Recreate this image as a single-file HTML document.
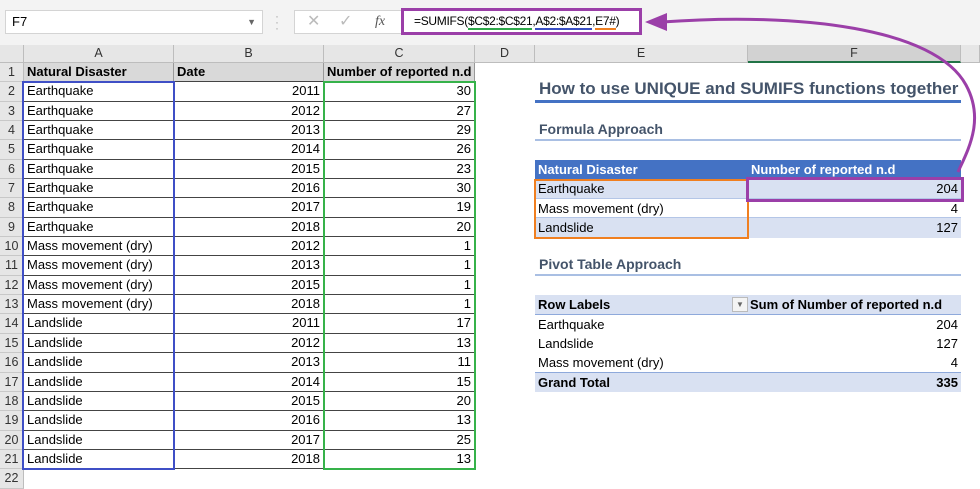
<!DOCTYPE html>
<html><head><meta charset="utf-8"><style>
*{box-sizing:border-box;margin:0;padding:0}
body{width:980px;height:489px;overflow:hidden;background:#fff;font-family:"Liberation Sans",Calibri,sans-serif;font-size:13px;color:#000;position:relative}
.abs{position:absolute}
.top{left:0;top:0;width:980px;height:45px;background:#f3f3f3}
.grid{position:absolute;left:0;top:63px;display:grid;grid-template-columns:24px 150px 150px 151px;grid-template-rows:repeat(22,19.35px)}
.grid div{border-bottom:1px solid #444;border-right:1px solid #999;padding:0 3px;line-height:18px;white-space:nowrap;overflow:hidden}
.grid .rh{background:#e6e6e6;border-bottom:1px solid #c8c8c8;border-right:1px solid #bdbdbd;text-align:center;padding:0;color:#333;font-size:12.5px}
.grid .h{background:#d9d9d9;font-weight:bold}
.grid .r{text-align:right}
.grid .e{border:none}
.ch{position:absolute;top:45px;height:18px;background:#e6e6e6;border-right:1px solid #bdbdbd;border-bottom:1px solid #bdbdbd;text-align:center;line-height:17px;color:#333;font-size:12.5px}
.t{position:absolute;color:#44546a;font-weight:bold;white-space:nowrap}
.row{position:absolute;height:19.5px;line-height:19px;padding:0 3px;white-space:nowrap}
</style></head><body>
<div class="abs top"></div>
<div class="abs" style="left:5px;top:10px;width:258px;height:24px;background:#fff;border:1px solid #d4d4d4;line-height:22px;padding-left:6px;font-size:13px">F7<span style="position:absolute;right:6px;top:0;font-size:9px;color:#666">▼</span></div>
<div class="abs" style="left:275px;top:13px;color:#aaa;font-size:12px;line-height:6px">·<br>·<br>·</div>
<div class="abs" style="left:294px;top:10px;width:108px;height:24px;background:#fff;border:1px solid #d4d4d4;color:#bbb;font-size:16px;line-height:22px"><span style="position:absolute;left:12px">✕</span><span style="position:absolute;left:44px">✓</span><span style="position:absolute;left:80px;color:#555;font-style:italic;font-family:'Liberation Serif',serif;font-size:14px">fx</span></div>
<div class="abs" style="left:401px;top:8px;width:241px;height:27px;background:#fff;border:3px solid #9b3fa8;line-height:20px;padding-left:10px;font-size:12px;letter-spacing:-0.3px;white-space:nowrap;overflow:hidden">=SUMIFS(<span style="border-bottom:2px solid #2ea84a">$C$2:$C$21</span>,<span style="border-bottom:2px solid #3a4fc4">A$2:$A$21</span>,<span style="border-bottom:2px solid #f07f20">E7#</span>)</div>
<div class="ch" style="left:0;width:24px"></div>
<div class="ch" style="left:24px;width:150px">A</div>
<div class="ch" style="left:174px;width:150px">B</div>
<div class="ch" style="left:324px;width:151px">C</div>
<div class="ch" style="left:475px;width:60px">D</div>
<div class="ch" style="left:535px;width:213px">E</div>
<div class="ch" style="left:748px;width:213px;background:#d2d2d2;border-bottom:2px solid #217346">F</div>
<div class="ch" style="left:961px;width:19px"></div>
<div class="grid">
<div class="rh">1</div><div class="h">Natural Disaster</div><div class="h">Date</div><div class="h">Number of reported n.d</div>
<div class="rh">2</div><div>Earthquake</div><div class="r">2011</div><div class="r">30</div>
<div class="rh">3</div><div>Earthquake</div><div class="r">2012</div><div class="r">27</div>
<div class="rh">4</div><div>Earthquake</div><div class="r">2013</div><div class="r">29</div>
<div class="rh">5</div><div>Earthquake</div><div class="r">2014</div><div class="r">26</div>
<div class="rh">6</div><div>Earthquake</div><div class="r">2015</div><div class="r">23</div>
<div class="rh">7</div><div>Earthquake</div><div class="r">2016</div><div class="r">30</div>
<div class="rh">8</div><div>Earthquake</div><div class="r">2017</div><div class="r">19</div>
<div class="rh">9</div><div>Earthquake</div><div class="r">2018</div><div class="r">20</div>
<div class="rh">10</div><div>Mass movement (dry)</div><div class="r">2012</div><div class="r">1</div>
<div class="rh">11</div><div>Mass movement (dry)</div><div class="r">2013</div><div class="r">1</div>
<div class="rh">12</div><div>Mass movement (dry)</div><div class="r">2015</div><div class="r">1</div>
<div class="rh">13</div><div>Mass movement (dry)</div><div class="r">2018</div><div class="r">1</div>
<div class="rh">14</div><div>Landslide</div><div class="r">2011</div><div class="r">17</div>
<div class="rh">15</div><div>Landslide</div><div class="r">2012</div><div class="r">13</div>
<div class="rh">16</div><div>Landslide</div><div class="r">2013</div><div class="r">11</div>
<div class="rh">17</div><div>Landslide</div><div class="r">2014</div><div class="r">15</div>
<div class="rh">18</div><div>Landslide</div><div class="r">2015</div><div class="r">20</div>
<div class="rh">19</div><div>Landslide</div><div class="r">2016</div><div class="r">13</div>
<div class="rh">20</div><div>Landslide</div><div class="r">2017</div><div class="r">25</div>
<div class="rh">21</div><div>Landslide</div><div class="r">2018</div><div class="r">13</div>
<div class="rh">22</div><div class="e"></div><div class="e"></div><div class="e"></div>
</div>
<div class="abs" style="left:22px;top:81px;width:153px;height:389px;border:2px solid #3f4fc6"></div>
<div class="abs" style="left:323px;top:81px;width:153px;height:389px;border:2px solid #36b24a"></div>
<div class="t" style="left:539px;top:79px;font-size:17px">How to use UNIQUE and SUMIFS functions together</div>
<div class="abs" style="left:535px;top:100px;width:426px;height:3px;background:#4472c4"></div>
<div class="t" style="left:539px;top:121px;font-size:14px">Formula Approach</div>
<div class="abs" style="left:535px;top:139px;width:426px;height:2px;background:#a9bfe3"></div>
<div class="abs" style="left:535px;top:160px;width:426px;height:78px;border:1px solid #8ea9db"></div>
<div class="row" style="left:535px;top:160px;width:426px;background:#4472c4;color:#fff;font-weight:bold"><span>Natural Disaster</span><span style="position:absolute;left:216px">Number of reported n.d</span></div>
<div class="row" style="left:535px;top:179px;width:426px;background:#d9e1f2;border-bottom:1px solid #b4c6e7">Earthquake<span style="position:absolute;right:3px">204</span></div>
<div class="row" style="left:535px;top:198.5px;width:426px;background:#fff;border-bottom:1px solid #b4c6e7">Mass movement (dry)<span style="position:absolute;right:3px">4</span></div>
<div class="row" style="left:535px;top:218px;width:426px;background:#d9e1f2">Landslide<span style="position:absolute;right:3px">127</span></div>
<div class="abs" style="left:534px;top:179px;width:215px;height:60px;border:2px solid #f07f20"></div>
<div class="abs" style="left:746px;top:177px;width:218px;height:25px;border:3px solid #9b3fa8"></div>
<div class="t" style="left:539px;top:256px;font-size:14px">Pivot Table Approach</div>
<div class="abs" style="left:535px;top:274px;width:426px;height:2px;background:#a9bfe3"></div>
<div class="row" style="left:535px;top:295px;width:426px;background:#d9e1f2;border-bottom:1px solid #8ea9db;font-weight:bold">Row Labels<span style="position:absolute;left:197px;top:2px;width:16px;height:15px;border:1px solid #bbb;background:#f4f4f4;font-size:8px;line-height:13px;text-align:center;color:#666;font-weight:normal">▼</span><span style="position:absolute;left:215px">Sum of Number of reported n.d</span></div>
<div class="row" style="left:535px;top:315px;width:426px">Earthquake<span style="position:absolute;right:3px">204</span></div>
<div class="row" style="left:535px;top:334px;width:426px">Landslide<span style="position:absolute;right:3px">127</span></div>
<div class="row" style="left:535px;top:353px;width:426px">Mass movement (dry)<span style="position:absolute;right:3px">4</span></div>
<div class="row" style="left:535px;top:372px;width:426px;background:#d9e1f2;border-top:1px solid #8ea9db;font-weight:bold">Grand Total<span style="position:absolute;right:3px">335</span></div>
<svg class="abs" style="left:0;top:0" width="980" height="489">
<path d="M662,22 C800,12 935,28 966,85 C985,120 968,150 958,172" fill="none" stroke="#9b3fa8" stroke-width="3"/>
<polygon points="645,22 667,13 667,31" fill="#9b3fa8"/>
</svg>
</body></html>
